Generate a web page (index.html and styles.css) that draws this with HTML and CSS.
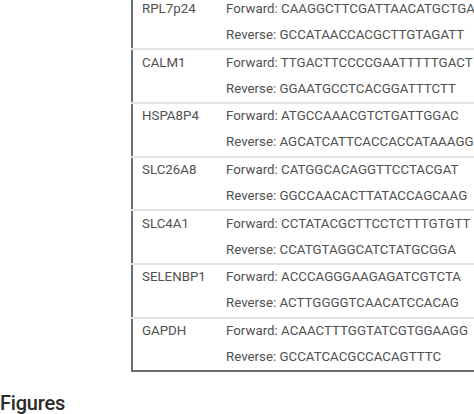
FILE: index.html
```html
<!DOCTYPE html>
<html lang="en">
<head>
<meta charset="utf-8">
<title>Primers</title>
<link rel="stylesheet" href="styles.css">
</head>
<body>
<div class="page">
  <div class="table-wrap">
    <table class="primers">
      <tbody>
        <tr class="fwd"><td class="gene" rowspan="2">RPL7p24</td><td class="seq">Forward: CAAGGCTTCGATTAACATGCTGA</td></tr>
        <tr class="rev"><td class="seq">Reverse: GCCATAACCACGCTTGTAGATT</td></tr>
        <tr class="fwd"><td class="gene" rowspan="2">CALM1</td><td class="seq">Forward: TTGACTTCCCCGAATTTTTGACT</td></tr>
        <tr class="rev"><td class="seq">Reverse: GGAATGCCTCACGGATTTCTT</td></tr>
        <tr class="fwd"><td class="gene" rowspan="2">HSPA8P4</td><td class="seq">Forward: ATGCCAAACGTCTGATTGGAC</td></tr>
        <tr class="rev"><td class="seq">Reverse: AGCATCATTCACCACCATAAAGG</td></tr>
        <tr class="fwd"><td class="gene" rowspan="2">SLC26A8</td><td class="seq">Forward: CATGGCACAGGTTCCTACGAT</td></tr>
        <tr class="rev"><td class="seq">Reverse: GGCCAACACTTATACCAGCAAG</td></tr>
        <tr class="fwd"><td class="gene" rowspan="2">SLC4A1</td><td class="seq">Forward: CCTATACGCTTCCTCTTTGTGTT</td></tr>
        <tr class="rev"><td class="seq">Reverse: CCATGTAGGCATCTATGCGGA</td></tr>
        <tr class="fwd"><td class="gene" rowspan="2">SELENBP1</td><td class="seq">Forward: ACCCAGGGAAGAGATCGTCTA</td></tr>
        <tr class="rev"><td class="seq">Reverse: ACTTGGGGTCAACATCCACAG</td></tr>
        <tr class="fwd"><td class="gene" rowspan="2">GAPDH</td><td class="seq">Forward: ACAACTTTGGTATCGTGGAAGG</td></tr>
        <tr class="rev last"><td class="seq">Reverse: GCCATCACGCCACAGTTTC</td></tr>
      </tbody>
    </table>
  </div>
  <h2 class="section-title">Figures</h2>
</div>
</body>
</html>
```

FILE: styles.css
```css
html, body {
  margin: 0;
  padding: 0;
  background: #ffffff;
  overflow: hidden;
}

.page {
  width: 474px;
  height: 414px;
  overflow: hidden;
  font-family: Roboto, "Liberation Sans", sans-serif;
}

.table-wrap {
  margin-top: -3.5px;
  margin-left: 131px;
  width: 440px;
}

.primers {
  border-collapse: collapse;
  width: 440px;
  border-left: 2px solid #6e6e6e;
  border-bottom: 2px solid #6e6e6e;
  color: #505050;
  font-size: 13.3px;
}

.primers td {
  padding: 3.5px 0 3.5px 9px;
  line-height: 18.85px;
  white-space: nowrap;
  vertical-align: top;
}

.primers .gene {
  width: 75px;
}

.primers tr.fwd td {
  border-top: 2px solid #e3e3e3;
}

.primers tr.fwd:first-child td {
  border-top: none;
}

.section-title {
  margin: 20px 0 0 0;
  font-size: 20px;
  font-weight: 500;
  line-height: 22px;
  color: #2b2b2b;
  letter-spacing: -0.2px;
}
```
